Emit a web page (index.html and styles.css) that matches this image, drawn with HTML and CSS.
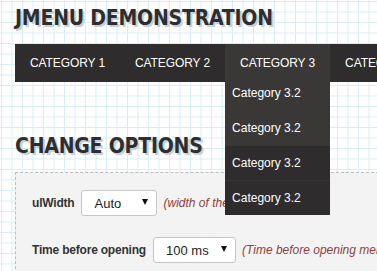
FILE: index.html
```html
<!DOCTYPE html>
<html>
<head>
<meta charset="utf-8">
<link rel="stylesheet" href="styles.css">
</head>
<body>
<div class="page">
  <h1 class="title">JMENU DEMONSTRATION</h1>
  <nav class="menu">
    <ul class="menu-list">
      <li class="menu-item"><a class="menu-link">CATEGORY 1</a></li>
      <li class="menu-item"><a class="menu-link">CATEGORY 2</a></li>
      <li class="menu-item is-open">
        <a class="menu-link">CATEGORY 3</a>
        <ul class="submenu">
          <li class="submenu-item is-light">Category 3.2</li>
          <li class="submenu-item is-light">Category 3.2</li>
          <li class="submenu-item">Category 3.2</li>
          <li class="submenu-item">Category 3.2</li>
        </ul>
      </li>
      <li class="menu-item"><a class="menu-link">CATEGORY 4</a></li>
      <li class="menu-item"><a class="menu-link">CATEGORY 5</a></li>
    </ul>
  </nav>
  <h2 class="title section-title">CHANGE OPTIONS</h2>
  <div class="options">
    <div class="option-row">
      <span class="option-label">ulWidth</span>
      <div class="select select-auto"><span>Auto</span><span class="arrow"></span></div>
      <span class="hint">(width of the submenu ul)</span>
    </div>
    <div class="option-row">
      <span class="option-label">Time before opening</span>
      <div class="select select-time"><span>100 ms</span><span class="arrow"></span></div>
      <span class="hint">(Time before opening menu, in ms)</span>
    </div>
  </div>
</div>
</body>
</html>
```
FILE: styles.css
```css
html, body {
  margin: 0;
  padding: 0;
  overflow: hidden;
}
body {
  background-color: #ffffff;
  background-image:
    linear-gradient(to right, #d9edf4 1px, transparent 1px),
    linear-gradient(to bottom, #d9edf4 1px, transparent 1px);
  background-size: 10.5px 10.5px;
  background-position: 1px 1px;
  font-family: "Liberation Sans", Arial, sans-serif;
}
.page {
  width: 700px;
  padding-left: 15px;
}
.title {
  margin: 0;
  padding-top: 7px;
  font-family: "DejaVu Sans Condensed", "DejaVu Sans", sans-serif;
  font-weight: bold;
  font-size: 21px;
  line-height: 22px;
  letter-spacing: -0.2px;
  color: #2e2e30;
  text-shadow: 2px 2px 0 #c8d0d6;
}
.menu {
  margin-top: 15px;
  position: relative;
  z-index: 10;
}
.menu-list {
  list-style: none;
  margin: 0;
  padding: 0;
  display: flex;
  background: #2e2c2c;
  height: 38px;
}
.menu-item {
  position: relative;
  flex: none;
}
.menu-link {
  display: block;
  position: relative;
  z-index: 2;
  padding: 0 15px;
  line-height: 38px;
  font-size: 12px;
  letter-spacing: -0.1px;
  color: #ffffff;
}
.is-open > .menu-link {
  background: #3a3837;
}
.submenu {
  list-style: none;
  margin: 0;
  padding: 0;
  position: absolute;
  left: 0;
  right: 0;
  top: 32px;
  z-index: 1;
}
.submenu-item {
  height: 34px;
  line-height: 34px;
  padding-left: 7px;
  font-size: 12px;
  color: #ffffff;
  background: #2e2c2c;
  border-bottom: 1px solid #383636;
}
.submenu-item.is-light {
  background: #3a3837;
}
.submenu-item:last-child {
  border-bottom: none;
}
.section-title {
  margin-top: 46px;
  margin-bottom: 15px;
}
.options {
  background: #f3f3f3;
  border: 1px dashed #bdbdbd;
  padding: 17px 16px 20px;
  display: flex;
  flex-direction: column;
  gap: 21px;
}
.option-row {
  display: flex;
  align-items: center;
  height: 26px;
}
.option-label {
  font-weight: bold;
  font-size: 12px;
  letter-spacing: -0.2px;
  color: #333333;
  margin-right: 7px;
}
.select {
  box-sizing: border-box;
  height: 26px;
  display: flex;
  align-items: center;
  justify-content: space-between;
  padding: 0 8px 0 12px;
  background: #ffffff;
  border: 1px solid #c6c6c6;
  border-radius: 3px;
  font-size: 13px;
  color: #222222;
}
.select-auto {
  width: 76px;
}
.select-time {
  width: 83px;
}
.arrow {
  width: 0;
  height: 0;
  border-left: 3px solid transparent;
  border-right: 3px solid transparent;
  border-top: 6px solid #111111;
  margin-top: -3px;
}
.hint {
  margin-left: 6px;
  font-size: 12px;
  font-style: italic;
  color: #8e4040;
  white-space: nowrap;
}
```
